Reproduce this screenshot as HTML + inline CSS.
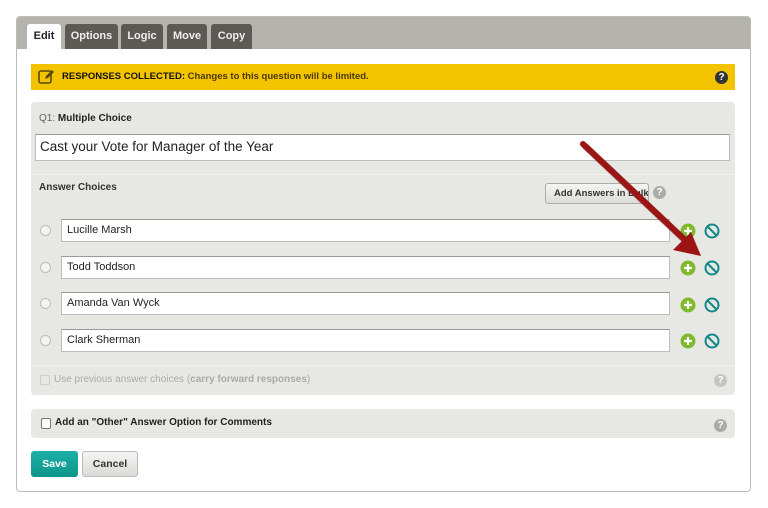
<!DOCTYPE html>
<html><head><style>
*{box-sizing:border-box;margin:0;padding:0}
body{width:768px;height:508px;background:#fff;font-family:"Liberation Sans",Arial,sans-serif;position:relative;overflow:hidden}
.abs{position:absolute;white-space:nowrap}
.panel{left:16px;top:16px;width:735px;height:476px;border:1px solid #bbb;border-radius:4px;background:#fff}
.bar{left:17px;top:17px;width:733px;height:32px;background:#b4b4ac;border-radius:3px 3px 0 0}
.tab{top:24px;height:25px;background:#5d5a55;color:#eee;font-size:11px;font-weight:bold;line-height:25px;text-align:center;border-radius:3px 3px 0 0}
.tab.on{background:#fff;color:#222}
.sec{background:#e7e7e3;border-radius:4px}
.inp{background:#fff;border:1px solid #bdbdbd;border-top-color:#999;font-size:11px;color:#222;padding-left:5px;line-height:20px}
.radio{width:11px;height:11px;border:1px solid #bbb;border-radius:50%;background:#f4f4f4}
.q{width:13px;height:13px;border-radius:50%;background:#aaa;color:#fff;font-size:10px;font-weight:bold;text-align:center;line-height:13px}
</style></head><body>
<div class="abs panel"></div>
<div class="abs bar"></div>
<div class="abs tab on" style="left:27px;width:34px">Edit</div>
<div class="abs tab" style="left:65px;width:53px">Options</div>
<div class="abs tab" style="left:121px;width:42px">Logic</div>
<div class="abs tab" style="left:167px;width:40px">Move</div>
<div class="abs tab" style="left:211px;width:41px">Copy</div>

<div class="abs" style="left:31px;top:64px;width:704px;height:26px;background:#f4c300"></div>
<svg class="abs" style="left:37px;top:68px" width="18" height="18" viewBox="0 0 18 18"><rect x="2" y="3" width="12" height="12" rx="2" fill="none" stroke="#5a4a00" stroke-width="1.6"/><path d="M8 11l1-3 6-6 2 2-6 6z" fill="#5a4a00"/></svg>
<div class="abs" style="left:62px;top:71px;font-size:9.5px;font-weight:bold;color:#333"><span style="color:#111">RESPONSES COLLECTED:</span> <span style="color:#4a3a00">Changes to this question will be limited.</span></div>
<div class="abs q" style="left:715px;top:71px;background:#333">?</div>

<div class="abs sec" style="left:31px;top:102px;width:704px;height:293px"></div>
<div class="abs" style="left:31px;top:174px;width:704px;height:1px;background:#f4f4f2"></div>
<div class="abs" style="left:31px;top:365px;width:704px;height:1px;background:#f4f4f2"></div>
<div class="abs" style="left:39px;top:113px;font-size:10px;color:#666">Q1: <b style="color:#222">Multiple Choice</b></div>
<div class="abs inp" style="left:35px;top:134px;width:695px;height:27px;font-size:13.5px;line-height:24px;padding-left:4px">Cast your Vote for Manager of the Year</div>
<div class="abs" style="left:39px;top:182px;font-size:10px;font-weight:bold;color:#333">Answer Choices</div>
<div class="abs" style="left:545px;top:183px;width:104px;height:21px;border:1px solid #aaa;border-radius:3px;background:linear-gradient(#f4f4f2,#dcdcd8);font-size:9.5px;font-weight:bold;color:#333;line-height:19px;padding-left:8px;overflow:hidden">Add Answers in Bulk</div>
<div class="abs q" style="left:653px;top:186px">?</div>

<div class="abs radio" style="left:40px;top:225px"></div>
<div class="abs inp" style="left:61px;top:219px;width:609px;height:23px">Lucille Marsh</div>
<div class="abs radio" style="left:40px;top:262px"></div>
<div class="abs inp" style="left:61px;top:256px;width:609px;height:23px">Todd Toddson</div>
<div class="abs radio" style="left:40px;top:298px"></div>
<div class="abs inp" style="left:61px;top:292px;width:609px;height:23px">Amanda Van Wyck</div>
<div class="abs radio" style="left:40px;top:335px"></div>
<div class="abs inp" style="left:61px;top:329px;width:609px;height:23px">Clark Sherman</div>

<svg class="abs" style="left:0;top:0" width="768" height="508">
<g id="ic">
<circle cx="688" cy="231" r="7.5" fill="#7fba2c"/><path d="M688 227v8M684 231h8" stroke="#fff" stroke-width="2.2"/>
<circle cx="712" cy="231" r="6.5" fill="none" stroke="#12888a" stroke-width="2"/><path d="M707.5 226.5l9 9" stroke="#12888a" stroke-width="2"/>
</g>
<use href="#ic" y="37"/><use href="#ic" y="74"/><use href="#ic" y="110"/>
<line x1="583" y1="144" x2="688" y2="243" stroke="#3a0808" stroke-opacity=".35" stroke-width="7" transform="translate(2,2)"/>
<line x1="583" y1="144" x2="686" y2="241" stroke="#9c1414" stroke-width="6" stroke-linecap="round"/>
<path d="M701 256l-28-6 18-18z" fill="#9c1414"/>
</svg>

<div class="abs" style="left:40px;top:375px;width:10px;height:10px;border:1px solid #ccc;border-radius:2px"></div>
<div class="abs" style="left:54px;top:374px;font-size:10px;color:#aaa">Use previous answer choices (<b>carry forward responses</b>)</div>
<div class="abs q" style="left:714px;top:374px;background:#c4c4c0">?</div>

<div class="abs sec" style="left:31px;top:409px;width:704px;height:29px"></div>
<div class="abs" style="left:41px;top:418px;width:10px;height:11px;border:1px solid #777;border-radius:2px;background:#fff"></div>
<div class="abs" style="left:55px;top:417px;font-size:10px;font-weight:bold;color:#222">Add an "Other" Answer Option for Comments</div>
<div class="abs q" style="left:714px;top:419px">?</div>

<div class="abs" style="left:31px;top:451px;width:47px;height:26px;border-radius:3px;background:linear-gradient(#1cb0a6,#0e958c);color:#fff;font-size:10.5px;font-weight:bold;text-align:center;line-height:26px">Save</div>
<div class="abs" style="left:82px;top:451px;width:56px;height:26px;border:1px solid #bbb;border-radius:3px;background:linear-gradient(#f4f4f2,#dadad6);color:#333;font-size:10.5px;font-weight:bold;text-align:center;line-height:24px">Cancel</div>
</body></html>
